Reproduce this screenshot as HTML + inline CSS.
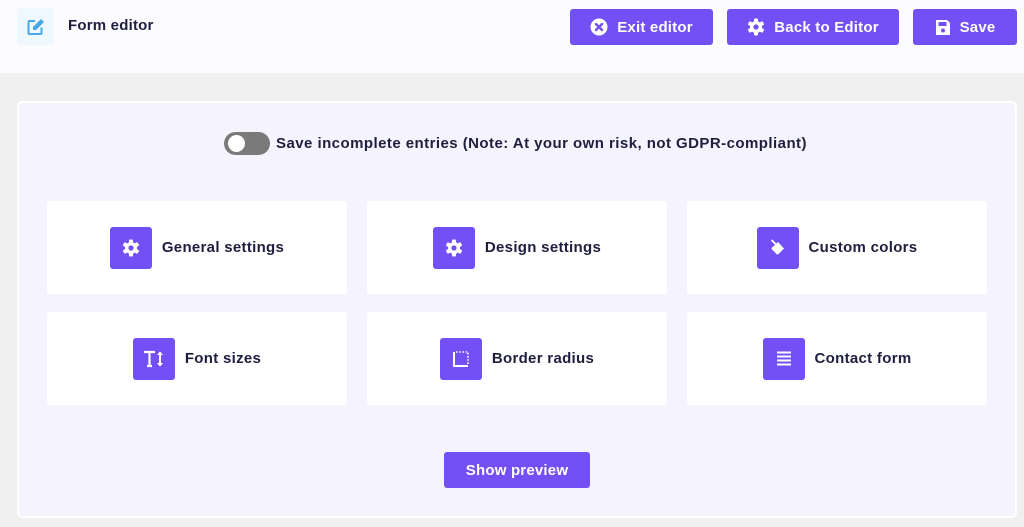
<!DOCTYPE html>
<html><head><meta charset="utf-8"><style>
*{box-sizing:border-box;margin:0;padding:0}
body{width:1024px;height:527px;overflow:hidden;background:#f0f0f0;font-family:"Liberation Sans",sans-serif;position:relative}
.hdr{position:absolute;left:0;top:0;width:1024px;height:73px;background:#fcfcfe}
.logo{position:absolute;left:17px;top:8px;width:37px;height:37px;background:#eef8fe;border-radius:4px;display:flex;align-items:center;justify-content:center}
.title{position:absolute;left:68px;top:17px;font-size:15px;font-weight:bold;color:#1e1e3f;letter-spacing:0.2px}
.btn{position:absolute;top:9px;height:36px;background:#7350f5;border-radius:3px;color:#fff;font-size:15px;font-weight:bold;display:flex;align-items:center;justify-content:center;gap:9px;letter-spacing:0.2px}
.panel{position:absolute;left:17px;top:101px;width:1000px;height:417px;background:#f5f4fe;border:2px solid #fff;border-radius:6px}
.tog{position:absolute;left:205px;top:29px;width:46px;height:23px;background:#7a7a7a;border-radius:12px}
.tog::after{content:"";position:absolute;left:4px;top:3px;width:17px;height:17px;background:#fff;border-radius:50%}
.tlab{position:absolute;left:257px;top:32px;font-size:15px;font-weight:bold;color:#1e1e3f;letter-spacing:0.45px;white-space:nowrap}
.card{position:absolute;width:300px;height:93px;background:#fff;border-radius:3px;display:flex;align-items:center;justify-content:center;gap:10px;font-size:15px;font-weight:bold;color:#1e1e3f;letter-spacing:0.3px}
.ic{width:42px;height:42px;background:#7350f5;border-radius:3px;display:flex;align-items:center;justify-content:center}
.prev{position:absolute;left:425px;top:349px;width:146px;height:36px;background:#7350f5;border-radius:3px;color:#fff;font-size:15px;font-weight:bold;display:flex;align-items:center;justify-content:center;letter-spacing:0.2px}
</style></head><body>
<div class="hdr">
<div class="logo"><svg width="20" height="20" viewBox="0 0 20 20"><path d="M9 4H3.5a1 1 0 0 0-1 1v11a1 1 0 0 0 1 1h11a1 1 0 0 0 1-1v-5.5" fill="none" stroke="#4aa8e8" stroke-width="2"/><path d="M15 2l3 3-8 8H7v-3z" fill="#4aa8e8"/></svg></div>
<div class="title">Form editor</div>
<div class="btn" style="left:570px;width:143px"><svg width="18" height="18" viewBox="0 0 18 18"><circle cx="9" cy="9" r="8.5" fill="#fff"/><path d="M6 6l6 6M12 6l-6 6" stroke="#7350f5" stroke-width="2.4" stroke-linecap="round"/></svg>Exit editor</div>
<div class="btn" style="left:727px;width:172px"><svg width="18" height="18" viewBox="0 0 18 18"><g fill="#fff"><circle cx="9" cy="9" r="6"/><rect x="7" y="0.5" width="4" height="17" rx="1"/><rect x="7" y="0.5" width="4" height="17" rx="1" transform="rotate(60 9 9)"/><rect x="7" y="0.5" width="4" height="17" rx="1" transform="rotate(120 9 9)"/></g><circle cx="9" cy="9" r="2.6" fill="#7350f5"/></svg>Back to Editor</div>
<div class="btn" style="left:913px;width:104px"><svg width="16" height="17" viewBox="0 0 16 17"><path d="M1 1h11l3 3v12H1z" fill="#fff"/><rect x="3.5" y="3" width="8" height="4" fill="#7350f5"/><circle cx="8" cy="11.5" r="2" fill="#7350f5"/></svg>Save</div>
</div>
<div class="panel">
<div class="tog"></div>
<div class="tlab">Save incomplete entries (Note: At your own risk, not GDPR-compliant)</div>
<div class="card" style="left:28px;top:98px"><div class="ic"><svg width="18" height="18" viewBox="0 0 18 18"><g fill="#fff"><circle cx="9" cy="9" r="6"/><rect x="7" y="0.5" width="4" height="17" rx="1"/><rect x="7" y="0.5" width="4" height="17" rx="1" transform="rotate(60 9 9)"/><rect x="7" y="0.5" width="4" height="17" rx="1" transform="rotate(120 9 9)"/></g><circle cx="9" cy="9" r="2.6" fill="#7350f5"/></svg></div>General settings</div>
<div class="card" style="left:348px;top:98px"><div class="ic"><svg width="18" height="18" viewBox="0 0 18 18"><g fill="#fff"><circle cx="9" cy="9" r="6"/><rect x="7" y="0.5" width="4" height="17" rx="1"/><rect x="7" y="0.5" width="4" height="17" rx="1" transform="rotate(60 9 9)"/><rect x="7" y="0.5" width="4" height="17" rx="1" transform="rotate(120 9 9)"/></g><circle cx="9" cy="9" r="2.6" fill="#7350f5"/></svg></div>Design settings</div>
<div class="card" style="left:668px;top:98px"><div class="ic"><svg width="20" height="20" viewBox="0 0 20 20"><path d="M4 9.5L10 4l6 6.5-5.5 5.5a1.5 1.5 0 0 1-2 0L4 11.5a1.4 1.4 0 0 1 0-2z" fill="#fff"/><path d="M4 2.5l7.5 7.5" stroke="#fff" stroke-width="1.8" stroke-linecap="round"/><path d="M6.2 8.5l5.3 1.5" stroke="#7350f5" stroke-width="0"/></svg></div>Custom colors</div>
<div class="card" style="left:28px;top:209px"><div class="ic"><svg width="22" height="18" viewBox="0 0 22 18"><path d="M1 2h11M6.5 2v14M4 16h5" stroke="#fff" stroke-width="2.2" fill="none"/><path d="M17 2v14" stroke="#fff" stroke-width="2"/><path d="M14 5l3-3.5 3 3.5zM14 13l3 3.5 3-3.5z" fill="#fff"/></svg></div>Font sizes</div>
<div class="card" style="left:348px;top:209px"><div class="ic"><svg width="18" height="18" viewBox="0 0 18 18"><path d="M2 2v14h14" stroke="#fff" stroke-width="2" fill="none"/><path d="M4 2h12v12" stroke="#fff" stroke-width="1.6" stroke-dasharray="1.6 1.6" fill="none"/></svg></div>Border radius</div>
<div class="card" style="left:668px;top:209px"><div class="ic"><svg width="18" height="18" viewBox="0 0 18 18"><path d="M2 2.5h14M2 6.5h14M2 10.5h14M2 14.5h14" stroke="#fff" stroke-width="2"/></svg></div>Contact form</div>
<div class="prev">Show preview</div>
</div>
</body></html>
